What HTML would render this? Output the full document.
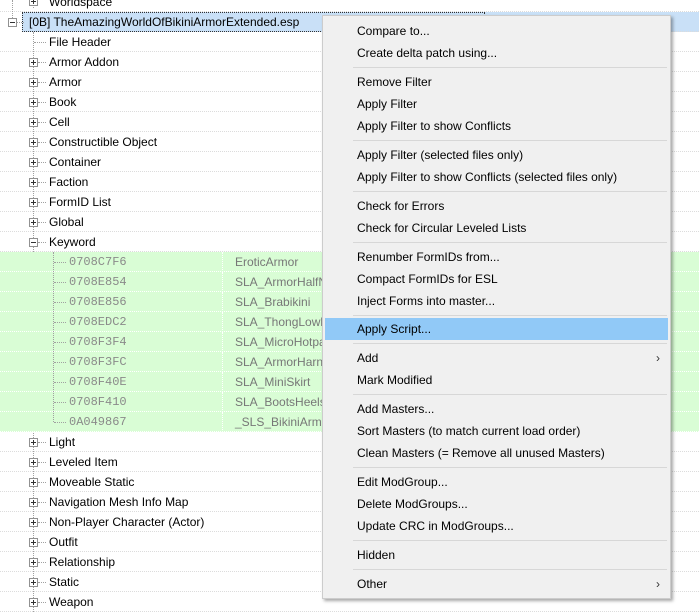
<!DOCTYPE html>
<html><head><meta charset="utf-8"><style>
*{margin:0;padding:0;box-sizing:border-box}
body{width:699px;height:613px;overflow:hidden;background:#fff;position:relative;font-family:"Liberation Sans",sans-serif;font-size:12px;color:#000}
.row{position:absolute;left:0;width:699px;height:20px;border-bottom:1px dotted #dcdcdc}
.t{position:absolute;white-space:nowrap;line-height:20px}
.exp{position:absolute;width:9px;height:9px;border:1px solid #919191;background:#fff}
.exp:before{content:"";position:absolute;left:1px;top:3px;width:5px;height:1px;background:#333}
.exp.p:after{content:"";position:absolute;left:3px;top:1px;width:1px;height:5px;background:#333}
.vl{position:absolute;border-left:1px dotted #a0a0a0;width:0}
.hl{position:absolute;border-top:1px dotted #a0a0a0;height:0}
.id{font-family:"Liberation Mono",monospace;color:#8a8a8a;font-size:12px}
.gn{color:#777}
#menu{position:absolute;left:322px;top:15px;width:349px;height:584px;background:#f0f0f0;border:1px solid #ccc;box-shadow:2px 2px 3px rgba(0,0,0,.35)}
.mi{position:absolute;left:34px;white-space:nowrap;line-height:22px;height:22px}
.sep{position:absolute;left:30px;width:314px;height:1px;background:#d7d7d7}
.arr{position:absolute;right:10px;font-size:12px;color:#333;line-height:22px}
</style></head><body>
<div class="row" style="top:-8px"></div>
<div class="row" style="top:12px;background:#c9e0f7;left:22px;width:677px"></div>
<div style="position:absolute;left:22px;top:12px;width:463px;height:20px;border:1px dotted #333"></div>
<div class="vl" style="left:12px;top:0;height:22px"></div>
<div class="vl" style="left:33px;top:0;height:8px"></div>
<div class="exp p" style="left:29px;top:-3px"></div>
<div class="t" style="left:49px;top:-8px">Worldspace</div>
<div class="exp" style="left:8px;top:18px"></div>
<div class="hl" style="left:17px;top:22px;width:7px"></div>
<div class="t" style="left:29px;top:12px">[0B] TheAmazingWorldOfBikiniArmorExtended.esp</div>
<div class="vl" style="left:33px;top:32px;height:580px"></div>

<div id="tree"></div>
<script>
var items=["File Header","Armor Addon","Armor","Book","Cell","Constructible Object","Container","Faction","FormID List","Global","Keyword"];
var h="";
function row(y,label,type){
 h+='<div class="row" style="top:'+y+'px"></div>';
 if(type=="n"){h+='<div class="hl" style="left:34px;top:'+(y+10)+'px;width:12px"></div>';}
 else{h+='<div class="exp '+(type=="p"?"p":"")+'" style="left:29px;top:'+(y+6)+'px"></div><div class="hl" style="left:38px;top:'+(y+10)+'px;width:8px"></div>';}
 h+='<div class="t" style="left:49px;top:'+y+'px">'+label+'</div>';
}
var y=32;
for(var i=0;i<items.length;i++){row(y,items[i],i==0?"n":(i==10?"m":"p"));y+=20;}
var ids=[["0708C7F6","EroticArmor"],["0708E854","SLA_ArmorHalfNaked"],["0708E856","SLA_Brabikini"],["0708EDC2","SLA_ThongLowleg"],["0708F3F4","SLA_MicroHotpants"],["0708F3FC","SLA_ArmorHarness"],["0708F40E","SLA_MiniSkirt"],["0708F410","SLA_BootsHeels"],["0A049867","_SLS_BikiniArmor"]];
for(var j=0;j<ids.length;j++){
 h+='<div class="row" style="top:'+y+'px;background:#d9fdd5;border-bottom:1px dotted #fff"></div>';
 h+='<div style="position:absolute;left:222px;top:'+y+'px;height:20px;border-left:1px dotted #fff"></div>';
 h+='<div class="hl" style="left:54px;top:'+(y+10)+'px;width:12px"></div>';
 h+='<div class="t id" style="left:69px;top:'+y+'px">'+ids[j][0]+'</div>';
 h+='<div class="t gn" style="left:235px;top:'+y+'px">'+ids[j][1]+'</div>';
 y+=20;}
h+='<div class="vl" style="left:53px;top:252px;height:170px"></div>';
var rest=["Light","Leveled Item","Moveable Static","Navigation Mesh Info Map","Non-Player Character (Actor)","Outfit","Relationship","Static","Weapon"];
for(var k=0;k<rest.length;k++){row(y,rest[k],"p");y+=20;}
document.getElementById("tree").innerHTML=h;
</script>

<div id="menu">
<div class="mi" style="top:4px">Compare to...</div>
<div class="mi" style="top:26px">Create delta patch using...</div>
<div class="sep" style="top:51px"></div>
<div class="mi" style="top:55px">Remove Filter</div>
<div class="mi" style="top:77px">Apply Filter</div>
<div class="mi" style="top:99px">Apply Filter to show Conflicts</div>
<div class="sep" style="top:124px"></div>
<div class="mi" style="top:128px">Apply Filter (selected files only)</div>
<div class="mi" style="top:150px">Apply Filter to show Conflicts (selected files only)</div>
<div class="sep" style="top:175px"></div>
<div class="mi" style="top:179px">Check for Errors</div>
<div class="mi" style="top:201px">Check for Circular Leveled Lists</div>
<div class="sep" style="top:226px"></div>
<div class="mi" style="top:230px">Renumber FormIDs from...</div>
<div class="mi" style="top:252px">Compact FormIDs for ESL</div>
<div class="mi" style="top:274px">Inject Forms into master...</div>
<div class="sep" style="top:299px"></div>
<div style="position:absolute;left:2px;top:302px;width:343px;height:22px;background:#91c9f7"></div>
<div class="mi" style="top:302px">Apply Script...</div>
<div class="sep" style="top:327px"></div>
<div class="mi" style="top:331px">Add</div><div class="arr" style="top:331px">›</div>
<div class="mi" style="top:353px">Mark Modified</div>
<div class="sep" style="top:378px"></div>
<div class="mi" style="top:382px">Add Masters...</div>
<div class="mi" style="top:404px">Sort Masters (to match current load order)</div>
<div class="mi" style="top:426px">Clean Masters (= Remove all unused Masters)</div>
<div class="sep" style="top:451px"></div>
<div class="mi" style="top:455px">Edit ModGroup...</div>
<div class="mi" style="top:477px">Delete ModGroups...</div>
<div class="mi" style="top:499px">Update CRC in ModGroups...</div>
<div class="sep" style="top:524px"></div>
<div class="mi" style="top:528px">Hidden</div>
<div class="sep" style="top:553px"></div>
<div class="mi" style="top:557px">Other</div><div class="arr" style="top:557px">›</div>
</div>
</body></html>
